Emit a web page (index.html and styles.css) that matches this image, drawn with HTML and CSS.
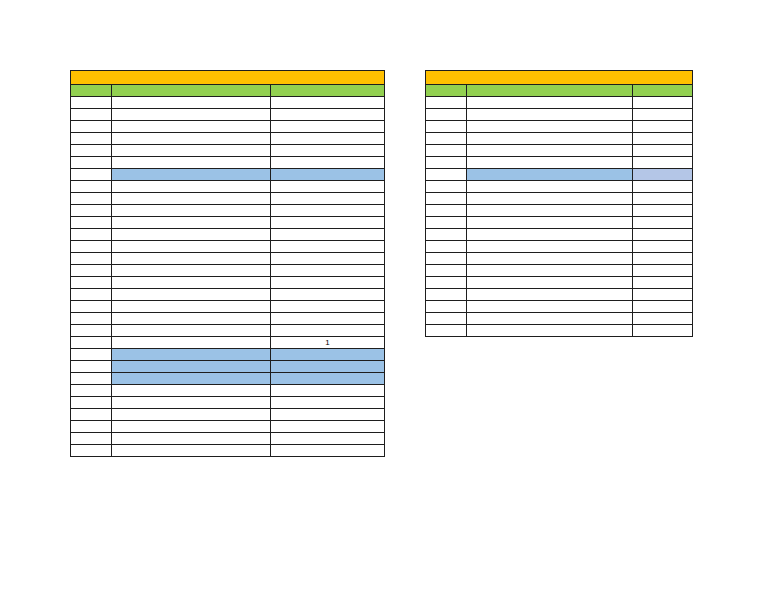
FILE: index.html
```html
<!DOCTYPE html>
<html>
<head>
<meta charset="utf-8">
<link rel="stylesheet" href="styles.css">
</head>
<body>
<div class="page">
  <div class="sheet sheet-left">
    <div class="title"></div>
    <div class="hd"></div><div class="hd"></div><div class="hd"></div>
    <div></div><div></div><div></div>
    <div></div><div></div><div></div>
    <div></div><div></div><div></div>
    <div></div><div></div><div></div>
    <div></div><div></div><div></div>
    <div></div><div></div><div></div>
    <div></div><div class="b"></div><div class="b"></div>
    <div></div><div></div><div></div>
    <div></div><div></div><div></div>
    <div></div><div></div><div></div>
    <div></div><div></div><div></div>
    <div></div><div></div><div></div>
    <div></div><div></div><div></div>
    <div></div><div></div><div></div>
    <div></div><div></div><div></div>
    <div></div><div></div><div></div>
    <div></div><div></div><div></div>
    <div></div><div></div><div></div>
    <div></div><div></div><div></div>
    <div></div><div></div><div></div>
    <div></div><div></div><div class="num">1</div>
    <div></div><div class="b"></div><div class="b"></div>
    <div></div><div class="b"></div><div class="b"></div>
    <div></div><div class="b"></div><div class="b"></div>
    <div></div><div></div><div></div>
    <div></div><div></div><div></div>
    <div></div><div></div><div></div>
    <div></div><div></div><div></div>
    <div></div><div></div><div></div>
    <div></div><div></div><div></div>
  </div>
  <div class="sheet sheet-right">
    <div class="title"></div>
    <div class="hd"></div><div class="hd"></div><div class="hd"></div>
    <div></div><div></div><div></div>
    <div></div><div></div><div></div>
    <div></div><div></div><div></div>
    <div></div><div></div><div></div>
    <div></div><div></div><div></div>
    <div></div><div></div><div></div>
    <div></div><div class="b"></div><div class="l"></div>
    <div></div><div></div><div></div>
    <div></div><div></div><div></div>
    <div></div><div></div><div></div>
    <div></div><div></div><div></div>
    <div></div><div></div><div></div>
    <div></div><div></div><div></div>
    <div></div><div></div><div></div>
    <div></div><div></div><div></div>
    <div></div><div></div><div></div>
    <div></div><div></div><div></div>
    <div></div><div></div><div></div>
    <div></div><div></div><div></div>
    <div></div><div></div><div></div>
  </div>
</div>
</body>
</html>
```
FILE: styles.css
```css
html, body {
  margin: 0;
  padding: 0;
  background: #ffffff;
  font-family: "Liberation Sans", Arial, sans-serif;
}
.page {
  display: flex;
  align-items: flex-start;
  gap: 40px;
  padding: 70px 0 0 70px;
}
.sheet {
  display: grid;
  gap: 1px;
  padding: 1px;
  background: #1e1e1e;
  grid-template-rows: 13px;
  grid-auto-rows: 11px;
}
.sheet-left {
  grid-template-columns: 40px 158px 113px;
}
.sheet-right {
  grid-template-columns: 40px 165px 59px;
}
.sheet > div {
  background: #ffffff;
}
.sheet > .title {
  grid-column: 1 / -1;
  background: #ffc000;
}
.sheet > .hd {
  background: #92d050;
}
.sheet > .b {
  background: #9bc2e6;
}
.sheet > .l {
  background: #b4c6e7;
}
.sheet > .num {
  font-size: 8px;
  line-height: 11px;
  text-align: center;
  color: #000;
}
```
